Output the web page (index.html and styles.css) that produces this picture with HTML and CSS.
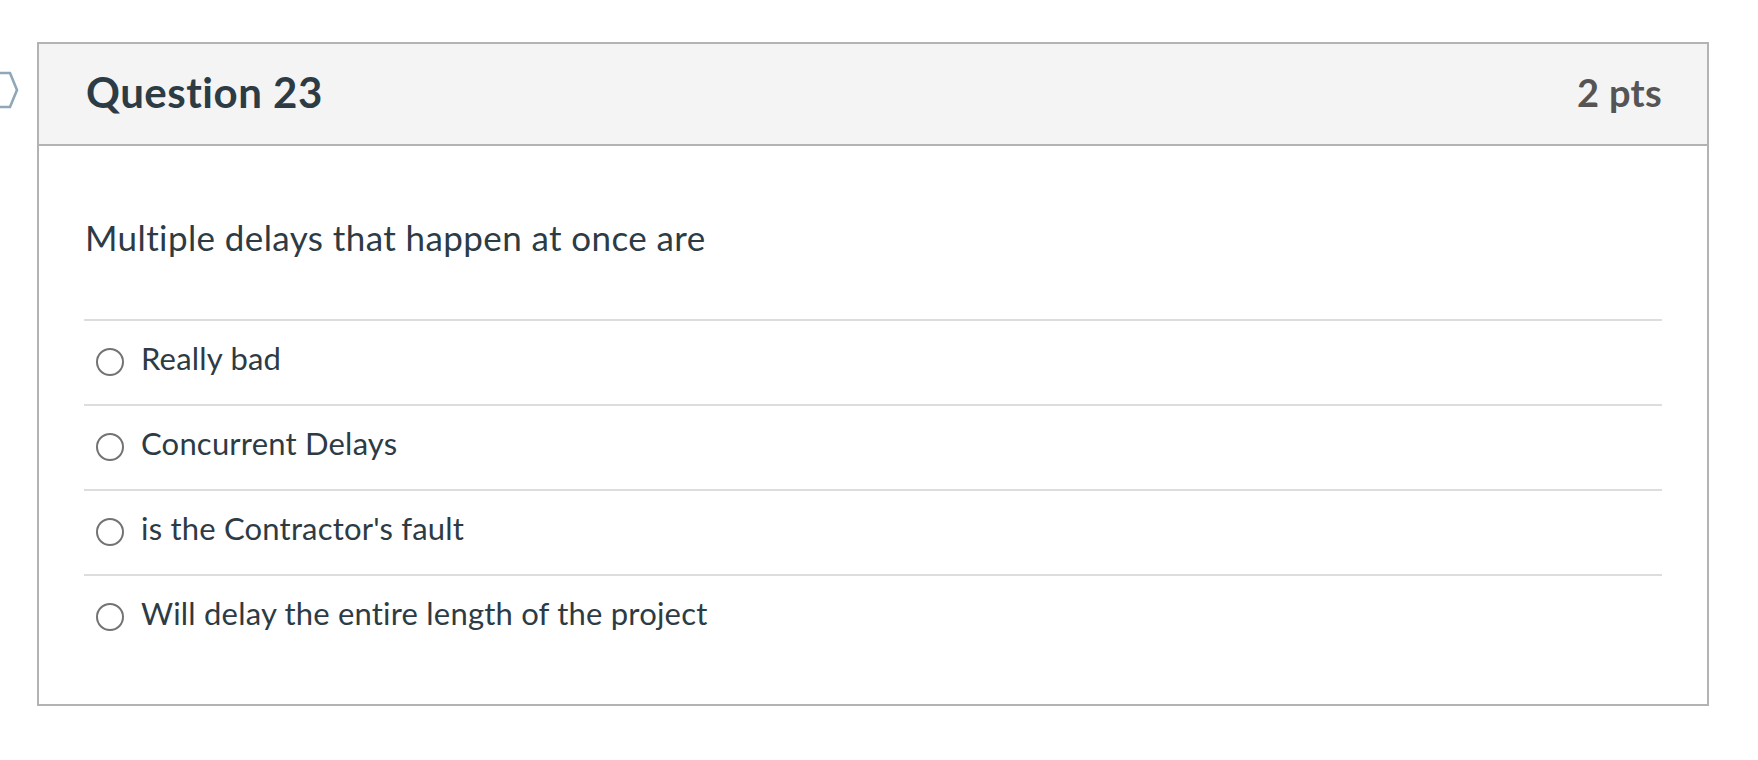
FILE: index.html
```html
<!DOCTYPE html>
<html>
<head>
<meta charset="utf-8">
<link rel="stylesheet" href="styles.css">
</head>
<body>
<div class="page">
  <svg class="flag" width="20" height="40" viewBox="0 0 20 40">
    <polyline points="-2,2 10,2 17,19 10,36 -2,36" fill="none" stroke="#8fa7b8" stroke-width="2.6" stroke-linejoin="miter"/>
  </svg>
  <div class="question">
    <div class="q-header">
      <h2 class="q-title">Question 23</h2>
      <span class="q-points">2 pts</span>
    </div>
    <div class="q-body">
      <p class="q-text">Multiple delays that happen at once are</p>
      <div class="answers">
        <label class="answer"><span class="radio"></span><span class="answer-text">Really bad</span></label>
        <label class="answer"><span class="radio"></span><span class="answer-text">Concurrent Delays</span></label>
        <label class="answer"><span class="radio"></span><span class="answer-text">is the Contractor's fault</span></label>
        <label class="answer"><span class="radio"></span><span class="answer-text">Will delay the entire length of the project</span></label>
      </div>
    </div>
  </div>
</div>
</body>
</html>
```

FILE: styles.css
```css
* { box-sizing: border-box; }
html, body { margin: 0; padding: 0; background: #ffffff; }
body { font-family: Lato, "Open Sans", sans-serif; color: #2d3b45; }

.page {
  position: relative;
  padding: 42px 0 0 37px;
}

.flag {
  position: absolute;
  left: 0;
  top: 71px;
}

.question {
  width: 1672px;
  border: 2px solid #b3b3b3;
  background: #fff;
}

.q-header {
  height: 102px;
  background: #f4f4f4;
  border-bottom: 2px solid #b3b3b3;
  display: flex;
  align-items: center;
  justify-content: space-between;
  padding: 0 45px 5px 47px;
}

.q-title {
  margin: 0;
  font-size: 42px;
  letter-spacing: 0.5px;
  font-weight: 700;
  color: #2d3b45;
  line-height: 1;
}

.q-points {
  font-size: 38px;
  letter-spacing: 0.3px;
  font-weight: 700;
  color: #555555;
  line-height: 1;
}

.q-body {
  padding: 0 45px 45px 45px;
}

.q-text {
  margin: 0;
  padding: 71px 0 62px 1px;
  font-size: 35px;
  letter-spacing: 0.4px;
  line-height: 40px;
  color: #2d3b45;
}

.answer {
  display: flex;
  align-items: center;
  height: 85px;
  border-top: 2px solid #dddddd;
}

.radio {
  width: 28px;
  height: 28px;
  border: 2px solid #737373;
  border-radius: 50%;
  margin-left: 12px;
  margin-right: 17px;
  margin-bottom: 2px;
  flex: none;
}

.answer-text {
  font-size: 31px;
  letter-spacing: 0.2px;
  color: #2d3b45;
  line-height: 1;
  margin-bottom: 8px;
}
```
